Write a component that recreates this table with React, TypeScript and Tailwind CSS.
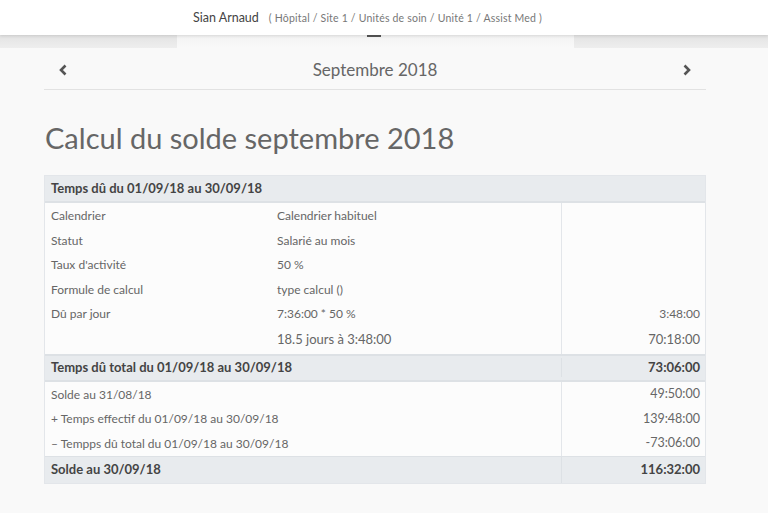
import React from "react";

const font = { fontFamily: "Lato, 'Open Sans', sans-serif" };

function Chevron({ dir }: { dir: "left" | "right" }) {
  return (
    <svg width="10" height="12" viewBox="0 0 10 12" className="text-[#555]">
      {dir === "left" ? (
        <path d="M7.5 1.5 L3 6 L7.5 10.5" fill="none" stroke="currentColor" strokeWidth="2.6" strokeLinejoin="miter" />
      ) : (
        <path d="M2.5 1.5 L7 6 L2.5 10.5" fill="none" stroke="currentColor" strokeWidth="2.6" strokeLinejoin="miter" />
      )}
    </svg>
  );
}

type Row = { label: string; value?: string; time?: string };

const duRows: Row[] = [
  { label: "Calendrier", value: "Calendrier habituel" },
  { label: "Statut", value: "Salarié au mois" },
  { label: "Taux d'activité", value: "50 %" },
  { label: "Formule de calcul", value: "type calcul ()" },
  { label: "Dû par jour", value: "7:36:00 * 50 %", time: "3:48:00" },
];

const soldeRows: Row[] = [
  { label: "Solde au 31/08/18", time: "49:50:00" },
  { label: "+ Temps effectif du 01/09/18 au 30/09/18", time: "139:48:00" },
  { label: "– Tempps dû total du 01/09/18 au 30/09/18", time: "-73:06:00" },
];

export default function App() {
  return (
    <div className="min-h-[513px] w-[768px] bg-[#f9f9f9] text-[#666]" style={font}>
      {/* Top bar */}
      <div className="relative z-10 h-[35px] bg-white shadow-[0_1px_3px_rgba(0,0,0,0.12)] flex items-center pl-[193px] pt-[2px]">
        <span className="text-[12.5px] text-[#444]">Sian Arnaud</span>
        <span className="ml-[10px] text-[10.5px] tracking-[0.2px] text-[#777]">( Hôpital / Site 1 / Unités de soin / Unité 1 / Assist Med )</span>
      </div>
      <div className="flex h-[13px]">
        <div className="w-[177px] bg-gradient-to-b from-[#e3e3e3] to-[#eeeeee]" />
        <div className="relative flex-1 bg-gradient-to-b from-[#f3f3f3] to-[#f9f9f9]">
          <div className="absolute left-[190px] top-0 h-[2px] w-[14px] bg-[#555]" />
        </div>
        <div className="w-[194px] bg-gradient-to-b from-[#e3e3e3] to-[#eeeeee]" />
      </div>

      <div className="mx-[44px] w-[662px]">
        {/* Month nav */}
        <div className="flex h-[42px] items-center justify-between border-b border-[#e2e2e2] px-[14px] pt-[2px]">
          <Chevron dir="left" />
          <span className="text-[17px] text-[#666]">Septembre 2018</span>
          <Chevron dir="right" />
        </div>

        <h1 className="mt-[30px] pl-[1px] text-[29px] leading-[36px] text-[#666]">Calcul du solde septembre 2018</h1>

        {/* Table */}
        <div className="mt-[19px] border border-[#e3e6ea] bg-[#fcfcfc]">
          <div className="flex h-[27px] items-center border-b-2 border-[#dde1e5] bg-[#e8ebee] px-[6px] text-[13px] font-bold text-[#444]">
            Temps dû du 01/09/18 au 30/09/18
          </div>
          <div className="flex">
            <div className="flex-1 pt-[1px]">
              {duRows.map((r) => (
                <div key={r.label} className="flex h-[24.5px] items-center text-[12px]">
                  <div className="w-[232px] pl-[6px]">{r.label}</div>
                  <div>{r.value}</div>
                </div>
              ))}
              <div className="flex h-[27px] items-center pl-[232px] text-[13px]">18.5 jours à 3:48:00</div>
            </div>
            <div className="w-[144px] border-l border-[#e3e6ea] pt-[1px] text-right">
              {duRows.map((r) => (
                <div key={r.label} className="flex h-[24.5px] items-center justify-end pr-[5px] text-[12px]">
                  {r.time}
                </div>
              ))}
              <div className="flex h-[27px] items-center justify-end pr-[5px] text-[13px]">70:18:00</div>
            </div>
          </div>

          <div className="flex h-[28px] items-center border-y-2 border-[#dde1e5] bg-[#e8ebee] text-[13px] font-bold text-[#444]">
            <div className="flex-1 pl-[6px]">Temps dû total du 01/09/18 au 30/09/18</div>
            <div className="w-[144px] border-l border-[#dde1e5] pr-[5px] text-right">73:06:00</div>
          </div>

          <div className="flex">
            <div className="flex-1 pt-[1px]">
              {soldeRows.map((r) => (
                <div key={r.label} className="flex h-[24.5px] items-center pl-[6px] text-[12px]">
                  {r.label}
                </div>
              ))}
            </div>
            <div className="w-[144px] border-l border-[#e3e6ea] pt-[1px]">
              {soldeRows.map((r) => (
                <div key={r.label} className="flex h-[24.5px] items-center justify-end pr-[5px] text-[12.5px]">
                  {r.time}
                </div>
              ))}
            </div>
          </div>

          <div className="flex h-[27px] items-center border-t border-[#dde1e5] bg-[#e8ebee] text-[13px] font-bold text-[#444]">
            <div className="flex-1 pl-[6px]">Solde au 30/09/18</div>
            <div className="flex h-full w-[144px] items-center justify-end border-l border-[#dde1e5] pr-[5px]">116:32:00</div>
          </div>
        </div>
      </div>
    </div>
  );
}
